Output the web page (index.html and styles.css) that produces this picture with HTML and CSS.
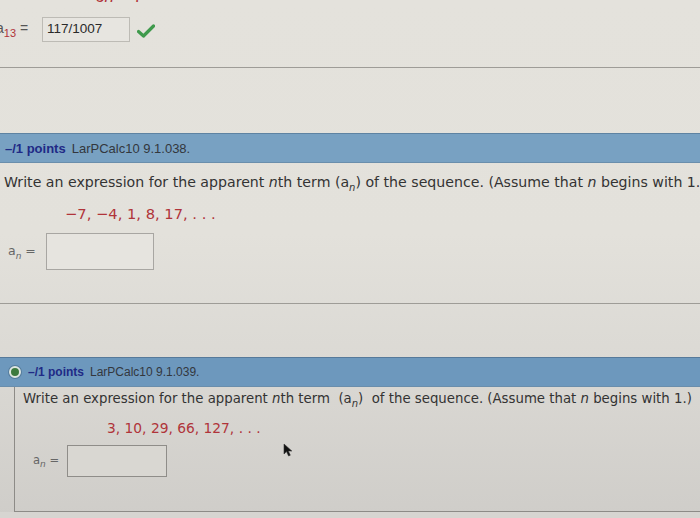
FILE: index.html
```html
<!DOCTYPE html>
<html>
<head>
<meta charset="utf-8">
<link rel="stylesheet" href="styles.css">
</head>
<body>
<div class="page">
  <div class="prev">
    <div class="cut"><div class="cut-text">6<i>n</i> − 7</div></div>
    <div class="answer-row">
      <span class="lbl">a<sub class="red">13</sub> =</span>
      <span class="answer">117/1007</span>
      <svg class="check" width="18" height="14" viewBox="0 0 18 14"><path d="M1.5 7.5 L6.5 12 L16.5 2" fill="none" stroke="#3f9a4c" stroke-width="3.2" stroke-linecap="round" stroke-linejoin="round"/></svg>
    </div>
    <div class="rule"></div>
  </div>

  <div class="q1">
    <div class="bar"><b class="pts">–/1 points</b><span class="ref">LarPCalc10 9.1.038.</span></div>
    <div class="qbody">
      <div class="prompt">Write an expression for the apparent <i>n</i>th term (a<sub><i>n</i></sub>) of the sequence. (Assume that <i>n</i> begins with 1.)</div>
      <div class="seq">−7, −4, 1, 8, 17, . . .</div>
      <div class="ans"><span class="an">a<sub><i>n</i></sub> =</span><span class="box"></span></div>
    </div>
  </div>
  <div class="rule rule2"></div>

  <div class="q2">
    <div class="bar bar2"><span class="plus"></span><b class="pts">–/1 points</b><span class="ref">LarPCalc10 9.1.039.</span></div>
    <div class="qbody2">
      <div class="prompt">Write an expression for the apparent <i>n</i>th term&nbsp; (a<sub><i>n</i></sub>)&nbsp; of the sequence. (Assume that <i>n</i> begins with 1.)</div>
      <div class="seq">3, 10, 29, 66, 127, . . .</div>
      <div class="ans"><span class="an">a<sub><i>n</i></sub> =</span><span class="box"></span></div>
    </div>
  </div>
  <div class="strip"></div>

  <svg class="cursor" width="11" height="14" viewBox="0 0 11 14"><path d="M1 1 L1 11 L3.5 8.6 L5.6 13 L7.3 12.2 L5.3 8 L8.8 8 Z" fill="#111" stroke="#333" stroke-width="0.6"/></svg>
</div>
</body>
</html>
```

FILE: styles.css
```css
html, body {
  margin: 0;
  padding: 0;
}
body {
  width: 700px;
  height: 518px;
  overflow: hidden;
  font-family: "DejaVu Sans", Verdana, sans-serif;
  color: #3a3a3a;
  background: linear-gradient(180deg, #e4e2dc 0%, #e3e1db 45%, #dbd9d4 70%, #cfcdc9 100%);
}
.page {
  position: relative;
  height: 518px;
}
.red { color: #b0343a; }

.cut {
  height: 6px;
  overflow: hidden;
}
.cut-text {
  margin-top: -12px;
  padding-left: 95px;
  font-family: "Liberation Sans", Arial, sans-serif;
  font-size: 17px;
  line-height: 18px;
  color: #b0343a;
}
.answer-row {
  margin-top: 11px;
  display: flex;
  align-items: center;
  height: 25px;
  font-family: "Liberation Sans", Arial, sans-serif;
}
.lbl {
  margin-left: -4px;
  font-size: 14px;
  color: #555;
  width: 46px;
}
.lbl sub { font-size: 11px; }
.answer {
  box-sizing: border-box;
  width: 88px;
  height: 25px;
  border: 1px solid #bdbbb5;
  padding: 3px 0 0 4px;
  font-size: 13.5px;
  color: #2a2a2a;
  background: #e7e5e0;
}
.check {
  margin-left: 7px;
  margin-top: 2px;
}
.rule {
  margin-top: 25px;
  border-top: 1px solid #9e9c97;
}

.q1 { margin-top: 65px; }
.bar {
  box-sizing: border-box;
  height: 30px;
  background: #78a1c2;
  border-top: 1px solid #5e83a2;
  border-bottom: 1px solid #6a8eac;
  display: flex;
  align-items: center;
  padding-left: 5px;
  font-family: "Liberation Sans", Arial, sans-serif;
  font-size: 13px;
  white-space: nowrap;
}
.pts {
  color: #1f2a86;
}
.ref {
  color: #33373d;
  margin-left: 6px;
}
.qbody {
  padding: 10px 0 0 4px;
  white-space: nowrap;
}
.prompt {
  font-size: 14.15px;
  line-height: 18px;
  color: #333;
}
.prompt sub { font-size: 10px; }
.seq {
  margin-top: 8px;
  margin-left: 61px;
  font-size: 14.7px;
  line-height: 18px;
  color: #b0343a;
}
.ans {
  margin-top: 10px;
  display: flex;
  align-items: center;
}
.an {
  margin-left: 4px;
  width: 38px;
  font-size: 12.5px;
  color: #666;
}
.an sub { font-size: 9px; }
.box {
  box-sizing: border-box;
  width: 108px;
  height: 37px;
  border: 1px solid #a8a6a2;
  background: #e6e4df;
}
.rule2 {
  margin-top: 33px;
}

.q2 { margin-top: 53px; }
.bar2 {
  background: #6d98bd;
  border-top: 1px solid #56799a;
  font-size: 12px;
  padding-left: 9px;
}
.plus {
  width: 8px;
  height: 8px;
  border-radius: 50%;
  background: #3d7a3e;
  border: 2px solid #dfe7e2;
  margin-right: 7px;
  box-shadow: 0 0 0 1px #557c9c;
}
.qbody2 {
  margin-left: 14px;
  border-left: 1px solid #8d8b87;
  border-bottom: 1px solid #8d8b87;
  padding: 3px 0 34px 8px;
  white-space: nowrap;
}
.qbody2 .prompt {
  font-size: 13.3px;
}
.qbody2 .seq {
  margin-top: 7px;
  margin-left: 84px;
  font-size: 13.8px;
}
.qbody2 .ans {
  margin-top: 8px;
}
.qbody2 .an {
  margin-left: 10px;
  width: 34px;
  font-size: 11.5px;
}
.qbody2 .box {
  width: 100px;
  height: 32px;
  background: #d9d7d2;
  border-color: #8f8d89;
}
.strip {
  height: 10px;
  background: #d7d5d1;
}
.cursor {
  position: absolute;
  left: 283px;
  top: 443px;
}
```
